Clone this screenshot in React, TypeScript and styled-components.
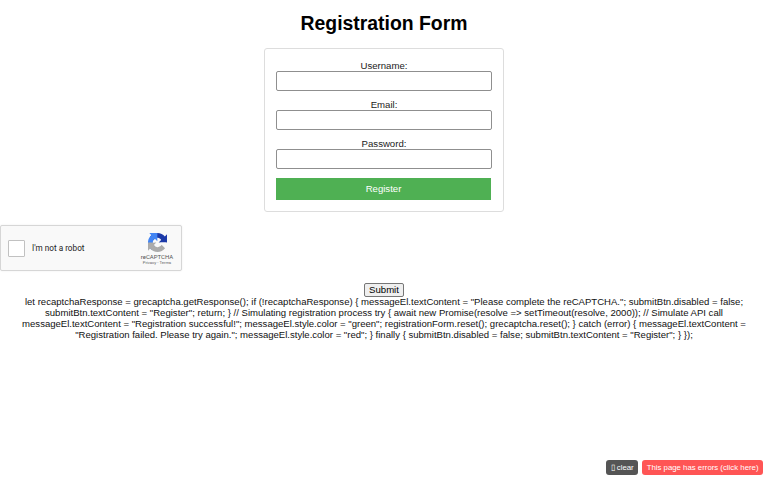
import React from "react";
import styled, { createGlobalStyle } from "styled-components";

const Global = createGlobalStyle`
  html, body { margin: 0; padding: 0; background: #fff; }
  body { font-family: "Liberation Sans", Arial, sans-serif; font-size: 9.6px; color: #111; }
`;
const Page = styled.div`
  width: 768px; height: 480px; overflow: hidden; display: flex; flex-direction: column; align-items: center;
`;
const Title = styled.h1`
  margin: 12px 0 13px; font-size: 19.4px; line-height: 23px; font-weight: 700; color: #000; text-align: center;
`;
const Card = styled.form`
  box-sizing: border-box; width: 240px; height: 164px; padding: 10px 11px; border: 1px solid #ddd; border-radius: 3px;
  display: flex; flex-direction: column; align-items: stretch;
`;
const Field = styled.div`
  display: flex; flex-direction: column; align-items: center; margin-bottom: 7px;
`;
const Label = styled.label`
  font-size: 9.6px; line-height: 14px; color: #222; height: 12px;
`;
const Input = styled.input`
  box-sizing: border-box; width: 216px; height: 20px; margin: 0; padding: 1px 2px;
  border: 1px solid #8f8f8f; border-radius: 2px; background: #fff;
`;
const Register = styled.button`
  box-sizing: border-box; width: 215px; height: 22px; margin: 2px 0 0 0; padding: 0 0 2px; border: none; background: #4caf50;
  color: #fff; opacity: 0.98; font: 9.6px "Liberation Sans", Arial, sans-serif; cursor: pointer;
`;
const CaptchaRow = styled.div`
  align-self: stretch; margin-top: 13px; height: 47px;
`;
const Captcha = styled.div`
  box-sizing: border-box; width: 182px; height: 46px; display: flex; align-items: center; background: #f9f9f9;
  border: 1px solid #d6d6d6; border-radius: 2px; box-shadow: 0 0 2px rgba(0,0,0,0.08); padding: 0 0 0 7px;
`;
const Check = styled.span`
  box-sizing: border-box; width: 17px; height: 17px; background: #fff; border: 1px solid #c1c1c1; border-radius: 1px; flex: none;
`;
const CaptchaLabel = styled.span`
  margin-left: 7px; font: 8.2px Roboto, "Liberation Sans", sans-serif; color: #222; flex: 1;
`;
const Brand = styled.div`
  width: 48px; display: flex; flex-direction: column; align-items: center; flex: none; padding-top: 2px;
`;
const BrandName = styled.span`
  font: 6px/7px Roboto, "Liberation Sans", sans-serif; color: #555; margin-top: 1px;
`;
const BrandLinks = styled.span`
  font: 4.2px/5px Roboto, "Liberation Sans", sans-serif; color: #666;
`;
const Submit = styled.button`
  box-sizing: border-box; width: 40px; height: 14px; margin: 11px 0 0; padding: 0; background: #efefef;
  border: 1px solid #767676; border-radius: 2px; font: 9.6px/12px "Liberation Sans", Arial, sans-serif; color: #000;
`;
const Code = styled.p`
  box-sizing: border-box; width: 768px; margin: -1px 0 0; padding: 0 22px; font-size: 9.55px; line-height: 11px; color: #111; text-align: center;
`;
const Badges = styled.div`
  position: fixed; right: 5px; bottom: 5px; display: flex; gap: 4px;
`;
const Badge = styled.span<{ $tone: "dark" | "red" }>`
  height: 15px; padding: 0 4.5px; border-radius: 3px; font-size: 7.8px; line-height: 15px; color: #fff; white-space: nowrap;
  background: ${(p) => (p.$tone === "dark" ? "#555" : "#f55")};
`;

const RecaptchaLogo = () => (
  <svg width="19" height="19" viewBox="0 0 64 64" aria-hidden="true">
    <path d="M64 32c0-.46-.01-.92-.03-1.38V4.5l-7.22 7.22C50.84 4.56 41.97 0 32 0 21.63 0 12.43 4.93 6.57 12.58l11.84 11.96a15.64 15.64 0 0 1 4.79-5.38c2.07-1.61 4.99-2.93 8.8-2.93.46 0 .82.05 1.08.15 4.72.37 8.81 3 11.22 6.83l-8.38 8.38c10.62-.04 22.62-.06 28.08.01z" fill="#1c3aa9" />
    <path d="M31.87 0c-.46 0-.92.01-1.38.03H4.37l7.22 7.22C4.43 13.16-.13 22.03-.13 32c0 10.37 4.93 19.57 12.58 25.43l11.96-11.84a15.64 15.64 0 0 1-5.38-4.79c-1.61-2.07-2.93-4.99-2.93-8.8 0-.46.05-.82.15-1.08.37-4.72 3-8.81 6.83-11.22l8.38 8.38C31.42 17.46 31.4 5.46 31.87 0z" fill="#4285f4" />
    <path d="M0 32c0 .46.01.92.03 1.38v26.12l7.22-7.22C13.16 59.44 22.03 64 32 64c10.37 0 19.57-4.93 25.43-12.58L45.59 39.46a15.64 15.64 0 0 1-4.79 5.38c-2.07 1.61-4.99 2.93-8.8 2.93-.46 0-.82-.05-1.08-.15-4.72-.37-8.81-3-11.22-6.83l8.38-8.38C17.46 32.45 5.46 32.47 0 32z" fill="#ababab" />
  </svg>
);

const code = `let recaptchaResponse = grecaptcha.getResponse(); if (!recaptchaResponse) { messageEl.textContent = "Please complete the reCAPTCHA."; submitBtn.disabled = false; submitBtn.textContent = "Register"; return; } // Simulating registration process try { await new Promise(resolve => setTimeout(resolve, 2000)); // Simulate API call messageEl.textContent = "Registration successful!"; messageEl.style.color = "green"; registrationForm.reset(); grecaptcha.reset(); } catch (error) { messageEl.textContent = "Registration failed. Please try again."; messageEl.style.color = "red"; } finally { submitBtn.disabled = false; submitBtn.textContent = "Register"; } });`;

export default function App() {
  return (
    <Page>
      <Global />
      <Title>Registration Form</Title>
      <Card onSubmit={(e) => e.preventDefault()}>
        {["Username:", "Email:", "Password:"].map((l) => (
          <Field key={l}>
            <Label>{l}</Label>
            <Input type={l === "Password:" ? "password" : "text"} />
          </Field>
        ))}
        <Register type="button">Register</Register>
      </Card>
      <CaptchaRow>
        <Captcha>
          <Check />
          <CaptchaLabel>I'm not a robot</CaptchaLabel>
          <Brand>
            <RecaptchaLogo />
            <BrandName>reCAPTCHA</BrandName>
            <BrandLinks>Privacy - Terms</BrandLinks>
          </Brand>
        </Captcha>
      </CaptchaRow>
      <Submit type="button">Submit</Submit>
      <Code>{code}</Code>
      <Badges>
        <Badge $tone="dark">▯ clear</Badge>
        <Badge $tone="red">This page has errors (click here)</Badge>
      </Badges>
    </Page>
  );
}
